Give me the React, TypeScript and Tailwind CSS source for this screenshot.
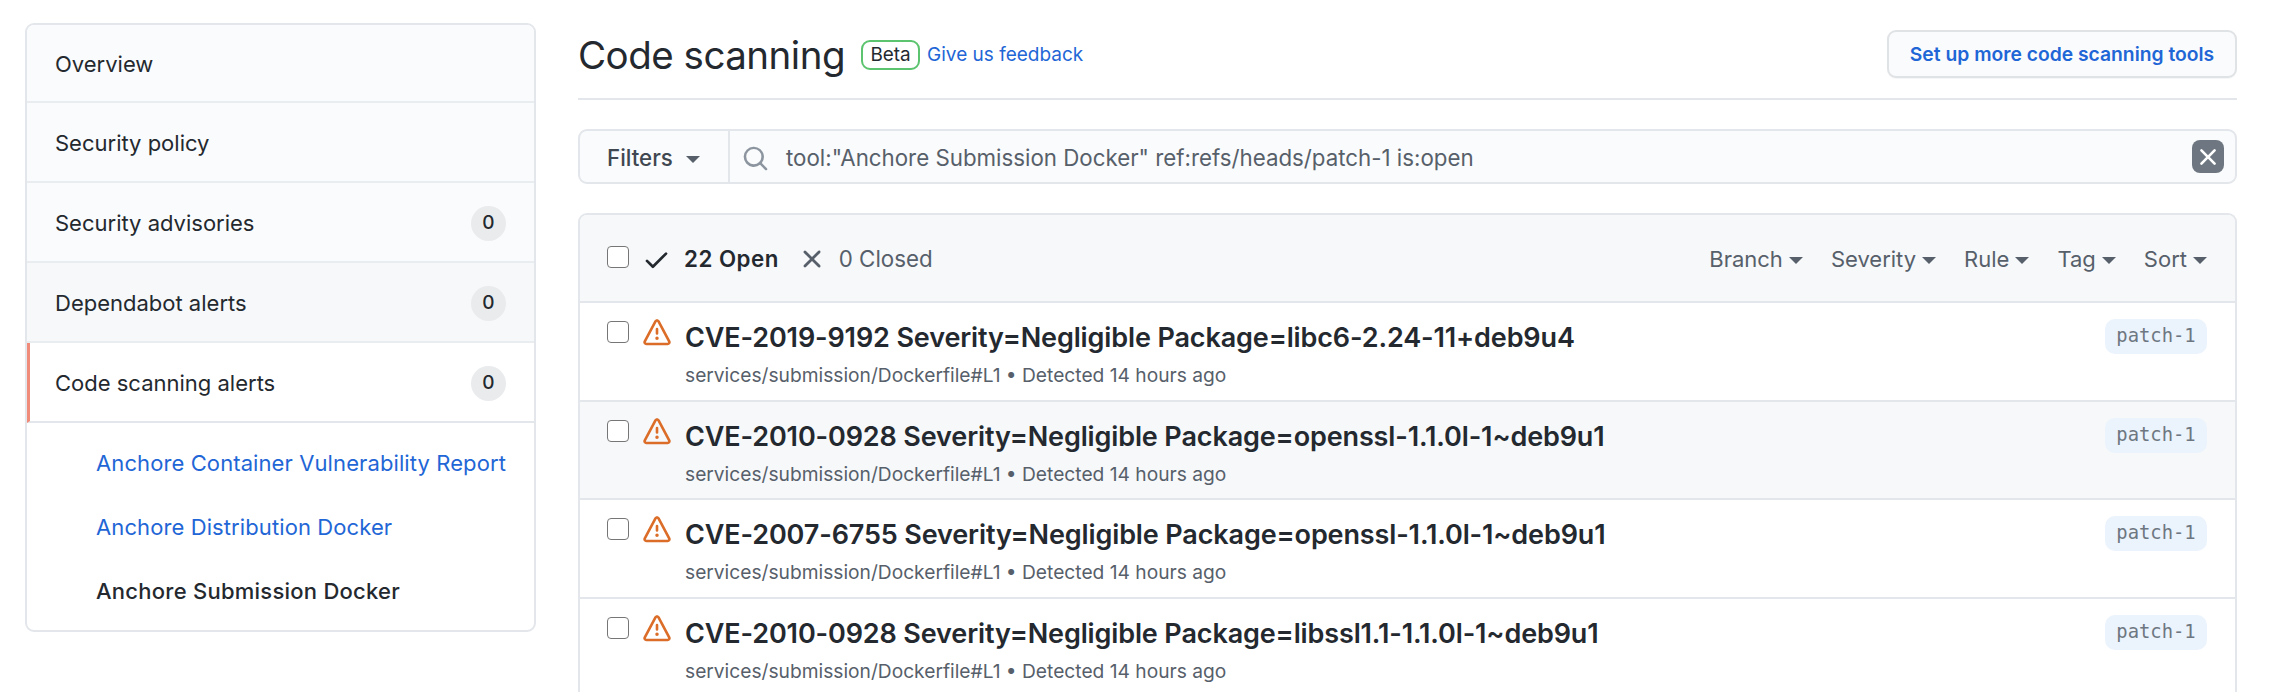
const FONT = "font-['Inter','Liberation_Sans',sans-serif]";

const navItems = [
  { label: "Overview", bg: "bg-[#fafbfc]" },
  { label: "Security policy", bg: "bg-[#fafbfc]" },
  { label: "Security advisories", count: 0, bg: "bg-[#fafbfc]" },
  { label: "Dependabot alerts", count: 0, bg: "bg-[#f6f8fa]" },
];

const alerts = [
  { title: "CVE-2019-9192 Severity=Negligible Package=libc6-2.24-11+deb9u4", alt: false },
  { title: "CVE-2010-0928 Severity=Negligible Package=openssl-1.1.0l-1~deb9u1", alt: true },
  { title: "CVE-2007-6755 Severity=Negligible Package=openssl-1.1.0l-1~deb9u1", alt: false },
  { title: "CVE-2010-0928 Severity=Negligible Package=libssl1.1-1.1.0l-1~deb9u1", alt: false },
];

const filters = ["Branch", "Severity", "Rule", "Tag", "Sort"];

function Octicon({ d, className }: { d: string; className: string }) {
  return (
    <svg viewBox="0 0 16 16" fill="currentColor" className={className}>
      <path d={d} />
    </svg>
  );
}

const alertPath =
  "M6.457 1.047c.659-1.234 2.427-1.234 3.086 0l6.082 11.378A1.75 1.75 0 0 1 14.082 15H1.918a1.75 1.75 0 0 1-1.543-2.575Zm1.763.707a.25.25 0 0 0-.44 0L1.698 13.132a.25.25 0 0 0 .22.368h12.164a.25.25 0 0 0 .22-.368Zm.53 3.996v2.5a.75.75 0 0 1-1.5 0v-2.5a.75.75 0 0 1 1.5 0ZM9 11a1 1 0 1 1-2 0 1 1 0 0 1 2 0Z";
const checkPath =
  "M13.78 4.22a.75.75 0 0 1 0 1.06l-7.25 7.25a.75.75 0 0 1-1.06 0L2.22 9.28a.751.751 0 0 1 .018-1.042.751.751 0 0 1 1.042-.018L6 10.94l6.72-6.72a.75.75 0 0 1 1.06 0Z";
const xPath =
  "M3.72 3.72a.75.75 0 0 1 1.06 0L8 6.94l3.22-3.22a.749.749 0 0 1 1.275.326.749.749 0 0 1-.215.734L9.06 8l3.22 3.22a.749.749 0 0 1-.326 1.275.749.749 0 0 1-.734-.215L8 9.06l-3.22 3.22a.751.751 0 0 1-1.042-.018.751.751 0 0 1-.018-1.042L6.94 8 3.72 4.78a.75.75 0 0 1 0-1.06Z";
const searchPath =
  "M10.68 11.74a6 6 0 0 1-7.922-8.982 6 6 0 0 1 8.982 7.922l3.04 3.04a.749.749 0 0 1-.326 1.275.749.749 0 0 1-.734-.215ZM11.5 7a4.499 4.499 0 1 0-8.997 0A4.499 4.499 0 0 0 11.5 7Z";

function Caret() {
  return <span className="inline-block w-0 h-0 mt-[2px] border-x-[7px] border-t-[7px] border-x-transparent border-t-[#57606a]" />;
}

function Counter({ value }: { value: number }) {
  return (
    <span className="w-[35px] h-[35px] rounded-full bg-[#e9ebed] flex items-center justify-center text-[19px] font-medium text-[#24292f]">
      {value}
    </span>
  );
}

function Checkbox() {
  return <span className="block w-[22px] h-[22px] shrink-0 rounded-[4px] border border-[#767676] bg-white" />;
}

export default function App() {
  return (
    <div className={`${FONT} h-[692px] w-[2277px] overflow-hidden bg-white flex text-[#24292f]`}>
      <aside className="ml-[25px] mt-[23px] w-[511px] h-[609px] shrink-0 border-2 border-[#e3e6ea] rounded-[9px] overflow-hidden text-[22px]">
        {navItems.map((item) => (
          <div
            key={item.label}
            className={`${item.bg} h-[80px] first:h-[78px] border-b-2 border-[#eaedf0] pl-[28px] pr-[28px] pt-[2px] flex items-center justify-between`}
          >
            <span>{item.label}</span>
            {item.count !== undefined && <Counter value={item.count} />}
          </div>
        ))}
        <div className="h-[80px] border-b-2 border-[#e3e6ea] border-l-[3px] border-l-[#ef8b78] pl-[25px] pr-[28px] pt-[2px] flex items-center justify-between">
          <span>Code scanning alerts</span>
          <Counter value={0} />
        </div>
        <div className="pt-[8px] pl-[69px] flex flex-col">
          <span className="h-[64px] flex items-center text-[#1f66d6] tracking-[0.1px]">Anchore Container Vulnerability Report</span>
          <span className="h-[64px] flex items-center text-[#1f66d6] tracking-[0.1px]">Anchore Distribution Docker</span>
          <span className="h-[64px] flex items-center font-medium tracking-[0.25px]">Anchore Submission Docker</span>
        </div>
      </aside>

      <main className="ml-[42px] w-[1659px] shrink-0">
        <header className="h-[100px] pt-[30px] border-b-2 border-[#e3e6ea] flex justify-between items-start">
          <div className="flex items-center h-[50px]">
            <h1 className="text-[38.5px] leading-none tracking-[-0.5px]">Code scanning</h1>
            <span className="ml-[16px] h-[30px] w-[59px] justify-center border-2 border-[#5cc46f] rounded-[9px] flex items-center text-[18.9px]">Beta</span>
            <a className="ml-[7px] text-[19px] text-[#1f66d6]">Give us feedback</a>
          </div>
          <button className="h-[48px] w-[350px] border-2 border-[#e0e3e6] rounded-[9px] bg-[#fafbfc] shadow-[0_1px_0_rgba(27,31,36,0.04)] text-[19.3px] font-semibold text-[#1f66d6]">
            Set up more code scanning tools
          </button>
        </header>

        <div className="mt-[29px] h-[55px] flex border-2 border-[#e3e6ea] rounded-[9px] bg-[#fafbfc] text-[22.3px]">
          <div className="w-[150px] shrink-0 border-r-2 border-[#e3e6ea] pl-[27px] pt-[3px] flex items-center gap-[13px] font-medium text-[#3f4751]">
            Filters
            <Caret />
          </div>
          <div className="flex-1 flex items-center pl-[12px] pr-[11px]">
            <Octicon d={searchPath} className="w-[27px] h-[27px] mt-[3px] text-[#8c959f]" />
            <span className="ml-[17px] flex-1 pt-[3px] text-[#57606a]">tool:"Anchore Submission Docker" ref:refs/heads/patch-1 is:open</span>
            <span className="w-[32px] h-[33px] rounded-[8px] bg-[#6e7781] flex items-center justify-center">
              <Octicon d={xPath} className="w-[28px] h-[28px] text-white" />
            </span>
          </div>
        </div>

        <section className="mt-[29px] border-x-2 border-t-2 border-[#e3e6ea] rounded-t-[9px] overflow-hidden">
          <div className="h-[88px] bg-[#f6f8fa] border-b-2 border-[#e3e6ea] pl-[27px] pr-[28px] pt-[2px] flex items-center justify-between text-[22.3px]">
            <div className="flex items-center">
              <span className="-mt-[4px]"><Checkbox /></span>
              <Octicon d={checkPath} className="ml-[13px] w-[29px] h-[29px]" />
              <span className="ml-[13px] font-semibold tracking-[0.5px]">22 Open</span>
              <Octicon d={xPath} className="ml-[18px] w-[30px] h-[30px] text-[#57606a]" />
              <span className="ml-[12px] text-[#57606a]">0 Closed</span>
            </div>
            <div className="flex items-center gap-[28px] text-[22px] text-[#57606a]">
              {filters.map((name) => (
                <span key={name} className="flex items-center gap-[6px]">
                  {name}
                  <Caret />
                </span>
              ))}
            </div>
          </div>

          {alerts.map((a, i) => (
            <div
              key={i}
              className={`h-[98.5px] border-b-2 border-[#e3e6ea] pl-[27px] pr-[28px] pt-[16px] flex ${a.alt ? "bg-[#f6f8fa]" : "bg-white"}`}
            >
              <span className="mt-[2px]"><Checkbox /></span>
              <Octicon d={alertPath} className="ml-[14px] w-[28px] h-[28px] text-[#db6d28] shrink-0" />
              <div className="ml-[14px] flex-1">
                <div className="text-[27px] leading-[36px] mt-[1px] font-semibold tracking-[-0.13px]">{a.title}</div>
                <div className="mt-[7px] text-[19.2px] leading-[24px] text-[#57606a]">
                  services/submission/Dockerfile#L1 • Detected 14 hours ago
                </div>
              </div>
              <span className="h-[35px] w-[102px] rounded-[10px] bg-[#ebf3fc] flex items-center justify-center font-['DejaVu_Sans_Mono',monospace] text-[18.85px] text-[#6e7781]">
                patch-1
              </span>
            </div>
          ))}
        </section>
      </main>
    </div>
  );
}
